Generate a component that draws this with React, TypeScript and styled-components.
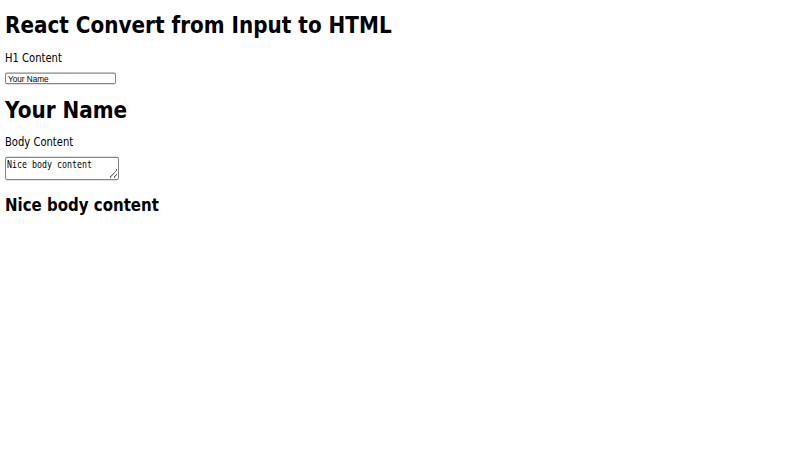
import React, { useState } from "react";
import styled, { createGlobalStyle } from "styled-components";

const GlobalStyle = createGlobalStyle`
  html {
    height: 100%;
    overflow: hidden;
    background: #ffffff;
  }
  body {
    margin: 0;
    min-height: 100%;
    background: #ffffff;
    font-family: "DejaVu Sans", sans-serif;
    font-size: 10px;
    color: #000000;
  }
  #root {
    min-height: 100vh;
  }
`;

/* The whole sheet is drawn slightly tall: glyphs are stretched vertically. */
const Page = styled.main`
  display: flow-root;
  padding: 0 5px 40px;
  transform: scaleY(1.17);
  transform-origin: 0 0;
`;

const Heading = styled.h1`
  font-size: 20px;
  font-weight: bold;
  line-height: normal;
  margin: 9.4px 0 0;
`;

const SubHeading = styled.h2`
  font-size: 15px;
  font-weight: bold;
  line-height: normal;
  margin: 12.2px 0 0;
`;

const Label = styled.p`
  font-size: 10px;
  line-height: normal;
  margin: 10.5px 0 0;
`;

const TextInput = styled.input`
  display: block;
  box-sizing: border-box;
  width: 111px;
  height: 10.4px;
  margin: 7px 0 0;
  padding: 0 2px;
  font-family: "Liberation Sans", Arial, sans-serif;
  font-size: 8.2px;
  color: #000000;
  background: #ffffff;
  border: 1px solid #858585;
  border-radius: 2px;
  outline: none;
`;

const TextArea = styled.textarea`
  display: block;
  box-sizing: border-box;
  width: 114px;
  height: 19.2px;
  margin: 7.2px 0 0;
  padding: 0.4px 1px 0;
  font-family: "DejaVu Sans Mono", monospace;
  font-size: 8.3px;
  line-height: normal;
  color: #000000;
  background: #ffffff;
  border: 1px solid #858585;
  border-radius: 2px;
  outline: none;
  overflow: hidden;
`;

export default function App() {
  const [title, setTitle] = useState("Your Name");
  const [body, setBody] = useState("Nice body content");

  return (
    <Page>
      <GlobalStyle />
      <Heading>React Convert from Input to HTML</Heading>
      <Label>H1 Content</Label>
      <TextInput value={title} onChange={(e) => setTitle(e.target.value)} />
      <Heading>{title}</Heading>
      <Label>Body Content</Label>
      <TextArea value={body} onChange={(e) => setBody(e.target.value)} />
      <SubHeading>{body}</SubHeading>
    </Page>
  );
}
